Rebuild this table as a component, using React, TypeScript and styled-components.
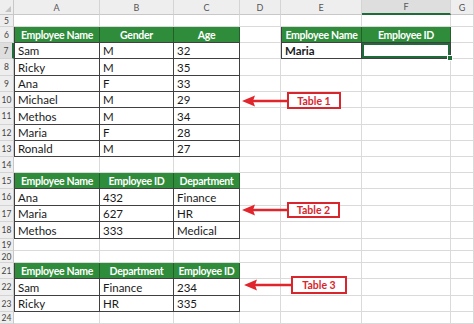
import React from 'react';
import styled, { createGlobalStyle, css } from 'styled-components';

const GlobalStyle = createGlobalStyle`
  html, body {
    margin: 0;
    padding: 0;
    background: #ffffff;
  }
  body {
    font-family: Lato, "Open Sans", "Liberation Sans", sans-serif;
    overflow: hidden;
  }
`;

const COLS = ['A', 'B', 'C', 'D', 'E', 'F', 'G'];
const COL_WIDTHS = [86, 74, 66, 41, 81, 89, 23];
const ROW_HEIGHTS: [number, number][] = [
    [5, 12], [6, 16], [7, 16], [8, 17], [9, 16], [10, 16], [11, 17], [12, 16],
    [13, 16], [14, 16], [15, 16], [16, 17], [17, 16], [18, 17], [19, 12],
    [20, 12], [21, 16], [22, 17], [23, 16], [24, 12],
];

const GREEN = '#2f8c3b';
const LINE = '#404040';
const GRID = '#dadada';

type CellKind = 'plain' | 'head' | 'data';
type CellSpec = { text?: string; kind: CellKind; bold?: boolean; edgeLeft?: boolean; selected?: boolean };

const tables = [
    { row: 6, col: 0, rows: [['Employee Name', 'Gender', 'Age'], ['Sam', 'M', '32'], ['Ricky', 'M', '35'], ['Ana', 'F', '33'], ['Michael', 'M', '29'], ['Methos', 'M', '34'], ['Maria', 'F', '28'], ['Ronald', 'M', '27']] },
    { row: 15, col: 0, rows: [['Employee Name', 'Employee ID', 'Department'], ['Ana', '432', 'Finance'], ['Maria', '627', 'HR'], ['Methos', '333', 'Medical']] },
    { row: 21, col: 0, rows: [['Employee Name', 'Department', 'Employee ID'], ['Sam', 'Finance', '234'], ['Ricky', 'HR', '335']] },
    { row: 6, col: 4, rows: [['Employee Name', 'Employee ID'], ['Maria', '']], boldData: true },
];

const cellMap: Record<string, CellSpec> = {};
tables.forEach((t) => {
    t.rows.forEach((r, ri) => {
        r.forEach((text, ci) => {
            cellMap[`${t.row + ri}-${t.col + ci}`] = {
                text,
                kind: ri === 0 ? 'head' : 'data',
                bold: ri > 0 && !!t.boldData,
                edgeLeft: ci === 0,
            };
        });
    });
});
cellMap['7-5'] = { ...cellMap['7-5'], selected: true };

const SELECTED_ROW = 7;
const SELECTED_COL = 5;

const Sheet = styled.div`
  position: relative;
  display: grid;
  grid-template-columns: 14px ${COL_WIDTHS.map((w) => `${w}px`).join(' ')};
  grid-template-rows: 15px ${ROW_HEIGHTS.map(([, h]) => `${h}px`).join(' ')};
  width: 474px;
  height: 324px;
  overflow: hidden;
`;

const Corner = styled.div`
  position: relative;
  background: #eeeeee;
  border-right: 1px solid #c8c8c8;
  border-bottom: 1px solid #c8c8c8;
  box-sizing: border-box;

  &::after {
    content: '';
    position: absolute;
    right: 2px;
    bottom: 2px;
    border-left: 6px solid transparent;
    border-bottom: 6px solid #c4c4c4;
  }
`;

const ColHead = styled.div<{ $selected?: boolean }>`
  display: flex;
  align-items: center;
  justify-content: center;
  box-sizing: border-box;
  background: ${(p) => (p.$selected ? '#dedede' : '#eeeeee')};
  border-right: 1px solid #d4d4d4;
  border-bottom: ${(p) => (p.$selected ? '2px solid #1f6b3a' : '1px solid #c8c8c8')};
  color: #555555;
  font-size: 9px;
`;

const RowHead = styled.div<{ $selected?: boolean }>`
  display: flex;
  align-items: center;
  justify-content: center;
  box-sizing: border-box;
  background: ${(p) => (p.$selected ? '#dedede' : '#eeeeee')};
  border-right: ${(p) => (p.$selected ? '2px solid #1f6b3a' : '1px solid #c8c8c8')};
  border-bottom: 1px solid #d4d4d4;
  color: #444444;
  font-size: 8.5px;
`;

const Cell = styled.div<{ $kind: CellKind; $bold?: boolean; $edgeLeft?: boolean; $selected?: boolean }>`
  position: relative;
  display: flex;
  align-items: center;
  box-sizing: border-box;
  padding: 0 3px;
  white-space: nowrap;
  overflow: visible;
  font-size: 11.5px;
  color: #1a1a1a;
  border-right: 1px solid ${GRID};
  border-bottom: 1px solid ${GRID};

  ${(p) => p.$kind === 'data' && css`
    border-right-color: ${LINE};
    border-bottom-color: ${LINE};
    font-weight: ${p.$bold ? 700 : 400};
  `}

  ${(p) => p.$kind === 'head' && css`
    justify-content: center;
    padding: 0 1px;
    background: ${GREEN};
    color: #ffffff;
    font-weight: 700;
    font-size: 10.5px;
    letter-spacing: -0.3px;
    border-right-color: #245f2b;
    border-bottom-color: ${LINE};
  `}

  ${(p) => p.$edgeLeft && css`
    border-left: 1px solid ${LINE};
  `}

  ${(p) => p.$selected && css`
    box-shadow: inset 0 0 0 2px #1f6b3a;

    &::after {
      content: '';
      position: absolute;
      right: -3px;
      bottom: -3px;
      width: 4px;
      height: 4px;
      background: #1f6b3a;
      border: 1px solid #ffffff;
      z-index: 2;
    }
  `}
`;

const Callout = styled.div<{ $left: number; $top: number }>`
  position: absolute;
  left: ${(p) => p.$left}px;
  top: ${(p) => p.$top}px;
  display: flex;
  align-items: center;
  z-index: 3;
`;

const Label = styled.div<{ $w: number; $h: number }>`
  width: ${(p) => p.$w}px;
  height: ${(p) => p.$h}px;
  box-sizing: border-box;
  display: flex;
  align-items: center;
  justify-content: center;
  background: #ffffff;
  border: 2px solid #d9262c;
  color: #d9262c;
  font-weight: 700;
  font-size: 10.5px;
`;

function Arrow({ width }: { width: number }) {
    return (
        <svg width={width} height={12} viewBox={`0 0 ${width} 12`}>
            <line x1={11} y1={6} x2={width} y2={6} stroke="#e0262c" strokeWidth={2.5} />
            <path d="M0 6 L13 0.5 L11 6 L13 11.5 Z" fill="#e0262c" />
        </svg>
    );
}

const callouts = [
    { label: 'Table 1', left: 242, top: 92, arrow: 45, w: 54, h: 17 },
    { label: 'Table 2', left: 242, top: 202, arrow: 45, w: 53, h: 16 },
    { label: 'Table 3', left: 244, top: 276, arrow: 47, w: 56, h: 18 },
];

export default function App() {
    return (
        <>
            <GlobalStyle />
            <Sheet>
                <Corner />
                {COLS.map((c, i) => (
                    <ColHead key={c} $selected={i === SELECTED_COL}>{c}</ColHead>
                ))}
                {ROW_HEIGHTS.map(([row]) => (
                    <React.Fragment key={row}>
                        <RowHead $selected={row === SELECTED_ROW}>{row}</RowHead>
                        {COLS.map((c, ci) => {
                            const spec = cellMap[`${row}-${ci}`] ?? { kind: 'plain' as CellKind };
                            return (
                                <Cell
                                    key={c}
                                    $kind={spec.kind}
                                    $bold={spec.bold}
                                    $edgeLeft={spec.edgeLeft}
                                    $selected={spec.selected}
                                >
                                    {spec.text}
                                </Cell>
                            );
                        })}
                    </React.Fragment>
                ))}

                {callouts.map((c) => (
                    <Callout key={c.label} $left={c.left} $top={c.top}>
                        <Arrow width={c.arrow} />
                        <Label $w={c.w} $h={c.h}>{c.label}</Label>
                    </Callout>
                ))}
            </Sheet>
        </>
    );
}
